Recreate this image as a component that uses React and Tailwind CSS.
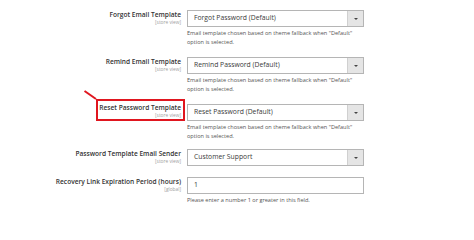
import React from 'react';

const rows = [
  {
    label: 'Forgot Email Template',
    scope: '[store view]',
    value: 'Forgot Password (Default)',
    select: true,
    note: ['Email template chosen based on theme fallback when "Default"', 'option is selected.'],
    mb: 'mb-[10px]',
  },
  {
    label: 'Remind Email Template',
    scope: '[store view]',
    value: 'Remind Password (Default)',
    select: true,
    note: ['Email template chosen based on theme fallback when "Default"', 'option is selected.'],
    mb: 'mb-[10px]',
  },
  {
    label: 'Reset Password Template',
    scope: '[store view]',
    value: 'Reset Password (Default)',
    select: true,
    marked: true,
    note: ['Email template chosen based on theme fallback when "Default"', 'option is selected.'],
    mb: 'mb-[8px]',
  },
  {
    label: 'Password Template Email Sender',
    scope: '[store view]',
    value: 'Customer Support',
    select: true,
    mb: 'mb-[11px]',
  },
  {
    label: 'Recovery Link Expiration Period (hours)',
    scope: '[global]',
    value: '1',
    note: ['Please enter a number 1 or greater in this field.'],
    mb: '',
  },
];

const Field = ({ row }) => (
  <div className={`flex ${row.mb}`}>
    <div className="w-[181px] flex justify-end">
      <div
        className={`relative text-right pt-[1px] leading-none ${
          row.marked ? 'border-2 border-[#e0161f] pl-[1px] pr-[2px] -mr-[4px] mt-[-5px] h-[22px] pt-[3px]' : ''
        }`}
      >
        {row.marked && (
          <span className="absolute left-[-16px] top-[-3px] w-[14px] h-[2px] bg-[#e0161f] rotate-[35deg] origin-right" />
        )}
        <div className="text-[6.6px] font-semibold text-[#333333] leading-[8px]">{row.label}</div>
        <div className="text-[4.8px] text-[#a0a0a0] leading-[6px]">{row.scope}</div>
      </div>
    </div>
    <div className="ml-[6px] w-[177px]">
      <div className="flex h-[17px] border border-[#b5b5b5] bg-white">
        <div className="flex-1 flex items-center pl-[6px] text-[6.8px] text-[#3a3a3a]">{row.value}</div>
        {row.select && (
          <div className="w-[16px] bg-[#e5e5e5] border-l border-[#d0d0d0] flex items-center justify-center">
            <span className="block w-0 h-0 border-l-[2px] border-r-[2px] border-t-[2.5px] border-l-transparent border-r-transparent border-t-[#444]" />
          </div>
        )}
      </div>
      {row.note && (
        <div className="pt-[2px] text-[5.6px] leading-[9px] text-[#555555]">
          {row.note.map((line) => (
            <div key={line}>{line}</div>
          ))}
        </div>
      )}
    </div>
  </div>
);

export default function App() {
  return (
    <div className="w-[474px] h-[207px] bg-white overflow-hidden pt-[10px] font-['Open_Sans',sans-serif]">
      {rows.map((row) => (
        <Field key={row.label} row={row} />
      ))}
    </div>
  );
}
